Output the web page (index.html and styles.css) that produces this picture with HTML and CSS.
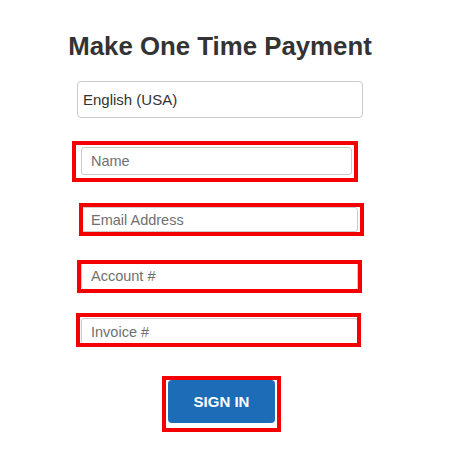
FILE: index.html
```html
<!DOCTYPE html>
<html lang="en">
<head>
<meta charset="utf-8">
<title>Make One Time Payment</title>
<link rel="stylesheet" href="styles.css">
</head>
<body>
<div class="page">
  <h1 class="title">Make One Time Payment</h1>
  <div class="lang">English (USA)</div>
  <div class="field field--name"><input class="input" type="text" placeholder="Name"></div>
  <div class="field field--email"><input class="input" type="text" placeholder="Email Address"></div>
  <div class="field field--account"><input class="input" type="text" placeholder="Account #"></div>
  <div class="field field--invoice"><input class="input" type="text" placeholder="Invoice #"></div>
  <div class="field field--btn"><button class="btn" type="button">SIGN IN</button></div>
</div>
</body>
</html>
```
FILE: styles.css
```css
html, body {
  margin: 0;
  background: #fff;
}
body {
  font-family: "Liberation Sans", Arial, sans-serif;
}
.page {
  width: 440px;
  display: flex;
  flex-direction: column;
  align-items: flex-start;
  padding-top: 31px;
}
.title {
  align-self: center;
  margin: 0;
  font-size: 25.8px;
  line-height: 30px;
  font-weight: bold;
  color: #333;
  white-space: nowrap;
}
.lang {
  box-sizing: border-box;
  margin: 20px 0 0 77px;
  width: 286px;
  height: 37px;
  border: 1px solid #ccc;
  border-radius: 4px;
  padding: 0 5px;
  display: flex;
  align-items: center;
  font-size: 15px;
  color: #333;
}
.field {
  box-sizing: border-box;
  border: 4px solid #f40000;
  overflow: hidden;
  display: flex;
  align-items: flex-start;
}
.input {
  box-sizing: border-box;
  flex: none;
  width: 277px;
  height: 28px;
  border: 1px solid #ccc;
  border-radius: 3px;
  padding: 0 9px;
  font-family: "Liberation Sans", Arial, sans-serif;
  font-size: 14.5px;
  color: #555;
  background: #fff;
  outline: none;
}
.input::placeholder {
  color: #707070;
  opacity: 1;
}
.field--name {
  margin: 23px 0 0 72px;
  width: 286px;
  height: 41px;
}
.field--name .input {
  margin: 2px 0 0 5px;
  width: 271px;
  height: 28px;
}
.field--email {
  margin: 21px 0 0 79px;
  width: 285px;
  height: 33px;
}
.field--email .input {
  margin: 0 0 0 -2px;
  height: 25px;
}
.field--account {
  margin: 24px 0 0 77px;
  width: 285px;
  height: 33px;
}
.field--account .input {
  margin: -2px 0 0 0;
  height: 28px;
}
.field--invoice {
  margin: 20px 0 0 76px;
  width: 285px;
  height: 34px;
}
.field--invoice .input {
  margin: 1px 0 0 1px;
  height: 27px;
}
.field--btn {
  margin: 29px 0 0 162px;
  width: 119px;
  height: 56px;
}
.btn {
  flex: none;
  margin: 0 0 0 2px;
  width: 107px;
  height: 43px;
  border: none;
  border-radius: 4px;
  background: #1d6cb7;
  color: #fff;
  font-family: "Liberation Sans", Arial, sans-serif;
  font-size: 15px;
  font-weight: bold;
  padding: 0;
}
```
